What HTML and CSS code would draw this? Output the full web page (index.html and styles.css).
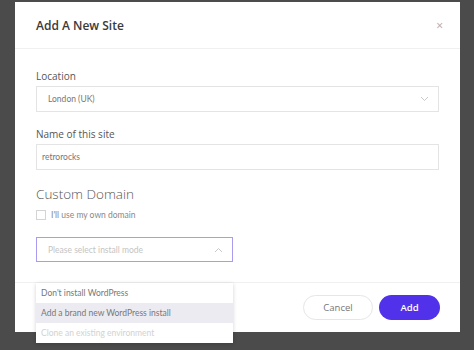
FILE: index.html
```html
<!DOCTYPE html>
<html lang="en">
<head>
  <meta charset="UTF-8">
  <title>Add A New Site</title>
  <meta name="viewport" content="width=device-width, initial-scale=1.0">
  <link rel="stylesheet" href="styles.css">
</head>
<body>
  <div class="modal">
    <div class="modal-header">
      <h2>Add A New Site</h2>
      <span class="close">&#215;</span>
    </div>

    <div class="modal-body">
      <label class="field-label">Location</label>
      <div class="select">
        <span>London (UK)</span>
        <svg class="chev" width="9" height="6" viewBox="0 0 9 6"><path d="M1 1l3.5 3.5L8 1" fill="none" stroke="#c9c9c9" stroke-width="1"/></svg>
      </div>

      <label class="field-label gap">Name of this site</label>
      <div class="input">retrorocks</div>

      <h3>Custom Domain</h3>
      <label class="check"><span class="box"></span> I'll use my own domain</label>

      <div class="install">
        <div class="select active">
          <span class="placeholder">Please select install mode</span>
          <svg class="chev" width="9" height="6" viewBox="0 0 9 6"><path d="M1 5l3.5-3.5L8 5" fill="none" stroke="#c9c9c9" stroke-width="1"/></svg>
        </div>
        <ul class="menu">
          <li>Don't install WordPress</li>
          <li class="hover">Add a brand new WordPress install</li>
          <li class="disabled">Clone an existing environment</li>
        </ul>
      </div>
    </div>

    <div class="modal-footer">
      <button class="btn cancel">Cancel</button>
      <button class="btn add">Add</button>
    </div>
  </div>
</body>
</html>
```

FILE: styles.css
```css
html, body {
  margin: 0;
  padding: 0;
  width: 100%;
  height: 100%;
  overflow: hidden;
  background: #4b4b4b;
  font-family: "Open Sans", sans-serif;
  color: #444;
}

body {
  padding: 2px 0 0 15px;
  box-sizing: border-box;
}

.modal {
  width: 445px;
  height: 330px;
  background: #fff;
  display: flex;
  flex-direction: column;
}

.modal-header {
  height: 46px;
  padding: 0 21px;
  display: flex;
  align-items: center;
  justify-content: space-between;
  border-bottom: 1px solid #f0f0f0;
}

h2 {
  margin: 0;
  font-size: 12px;
  font-weight: 600;
  color: #3a3a3a;
}

.close {
  font-size: 12px;
  color: #a8a8a8;
  margin-right: -4px;
}

.modal-body {
  padding: 20px 21px 20px;
  border-bottom: 1px solid #f0f0f0;
}

.field-label {
  display: block;
  font-size: 10px;
  line-height: 14px;
  color: #555;
  margin-bottom: 3px;
}

.field-label.gap {
  margin-top: 15px;
}

.select, .input {
  height: 26px;
  box-sizing: border-box;
  border: 1px solid #e4e4e4;
  font-family: "Lato", sans-serif;
  font-size: 8.5px;
  color: #777;
  display: flex;
  align-items: center;
  justify-content: space-between;
}

.select {
  padding: 0 9px 0 11px;
}

.input {
  padding: 0 5px;
}

h3 {
  margin: 15px 0 0;
  font-size: 13.5px;
  line-height: 18px;
  font-weight: 300;
  color: #555;
}

.check {
  margin-top: 5px;
  display: flex;
  align-items: center;
  gap: 5px;
  height: 14px;
  font-family: "Lato", sans-serif;
  font-size: 8.5px;
  color: #888;
}

.box {
  width: 8px;
  height: 8px;
  border: 1px solid #d4d4d4;
}

.install {
  position: relative;
  width: 197px;
  margin-top: 15px;
}

.select.active {
  height: 25px;
  border-color: #a99bef;
  border-width: 1.5px;
}

.placeholder {
  color: #c4c4c4;
}

.menu {
  position: absolute;
  top: 46px;
  left: 0;
  right: 0;
  margin: 0;
  padding: 0;
  list-style: none;
  background: #fff;
  box-shadow: 0 1px 4px rgba(0, 0, 0, 0.18);
  font-family: "Lato", sans-serif;
  font-size: 8.5px;
  color: #777;
  z-index: 2;
}

.menu li {
  height: 20px;
  line-height: 20px;
  padding: 0 5px;
}

.menu li.hover {
  background: #ecebf1;
}

.menu li.disabled {
  color: #d2d2d2;
}

.modal-footer {
  flex-grow: 1;
  display: flex;
  align-items: center;
  justify-content: flex-end;
  gap: 6px;
  padding: 0 20px;
}

.btn {
  height: 25px;
  border-radius: 13px;
  font-family: "Open Sans", sans-serif;
  font-size: 9.5px;
  cursor: pointer;
}

.cancel {
  width: 70px;
  background: #fff;
  border: 1px solid #e6e6e6;
  color: #777;
}

.add {
  width: 61px;
  background: #5231ea;
  border: none;
  color: #fff;
  font-weight: 600;
}
```
